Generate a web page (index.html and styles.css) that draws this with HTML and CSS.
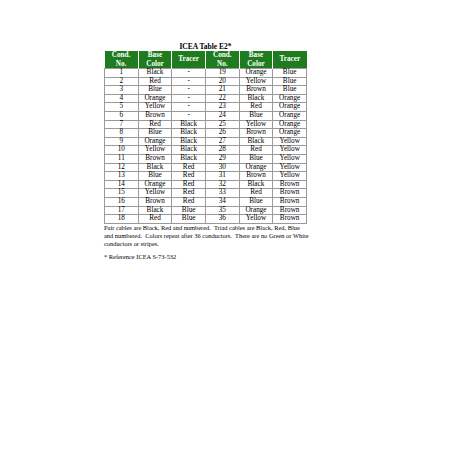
FILE: index.html
```html
<!DOCTYPE html>
<html>
<head>
<meta charset="utf-8">
<link rel="stylesheet" href="styles.css">
</head>
<body>
<div class="doc">
  <div class="title">ICEA Table E2*</div>
  <table class="tbl">
    <colgroup><col><col><col><col><col><col></colgroup>
    <thead>
      <tr><th>Cond.<br>No.</th><th>Base<br>Color</th><th>Tracer</th><th>Cond.<br>No.</th><th>Base<br>Color</th><th>Tracer</th></tr>
    </thead>
    <tbody>
      <tr><td>1</td><td>Black</td><td>-</td><td>19</td><td>Orange</td><td>Blue</td></tr>
      <tr><td>2</td><td>Red</td><td>-</td><td>20</td><td>Yellow</td><td>Blue</td></tr>
      <tr><td>3</td><td>Blue</td><td>-</td><td>21</td><td>Brown</td><td>Blue</td></tr>
      <tr><td>4</td><td>Orange</td><td>-</td><td>22</td><td>Black</td><td>Orange</td></tr>
      <tr><td>5</td><td>Yellow</td><td>-</td><td>23</td><td>Red</td><td>Orange</td></tr>
      <tr><td>6</td><td>Brown</td><td>-</td><td>24</td><td>Blue</td><td>Orange</td></tr>
      <tr><td>7</td><td>Red</td><td>Black</td><td>25</td><td>Yellow</td><td>Orange</td></tr>
      <tr><td>8</td><td>Blue</td><td>Black</td><td>26</td><td>Brown</td><td>Orange</td></tr>
      <tr><td>9</td><td>Orange</td><td>Black</td><td>27</td><td>Black</td><td>Yellow</td></tr>
      <tr><td>10</td><td>Yellow</td><td>Black</td><td>28</td><td>Red</td><td>Yellow</td></tr>
      <tr><td>11</td><td>Brown</td><td>Black</td><td>29</td><td>Blue</td><td>Yellow</td></tr>
      <tr><td>12</td><td>Black</td><td>Red</td><td>30</td><td>Orange</td><td>Yellow</td></tr>
      <tr><td>13</td><td>Blue</td><td>Red</td><td>31</td><td>Brown</td><td>Yellow</td></tr>
      <tr><td>14</td><td>Orange</td><td>Red</td><td>32</td><td>Black</td><td>Brown</td></tr>
      <tr><td>15</td><td>Yellow</td><td>Red</td><td>33</td><td>Red</td><td>Brown</td></tr>
      <tr><td>16</td><td>Brown</td><td>Red</td><td>34</td><td>Blue</td><td>Brown</td></tr>
      <tr><td>17</td><td>Black</td><td>Blue</td><td>35</td><td>Orange</td><td>Brown</td></tr>
      <tr><td>18</td><td>Red</td><td>Blue</td><td>36</td><td>Yellow</td><td>Brown</td></tr>
    </tbody>
  </table>
  <p class="note">Pair cables are Black, Red and numbered.&nbsp; Triad cables are Black, Red, Blue and numbered.&nbsp; Colors repeat after 36 conductors.&nbsp; There are no Green or White conductors or stripes.</p>
  <p class="ref">* Reference ICEA S-73-532</p>
</div>
</body>
</html>
```
FILE: styles.css
```css
html, body {
  margin: 0;
  padding: 0;
  background: #ffffff;
}
body {
  font-family: "Liberation Serif", "Times New Roman", serif;
  color: #000;
}
.doc {
  width: 203px;
  margin: 43px 0 0 104px;
}
.title {
  font-weight: bold;
  font-size: 7.5px;
  line-height: 8px;
  text-align: center;
}
.tbl {
  width: 203px;
  border-collapse: collapse;
  table-layout: fixed;
  font-size: 7.2px;
  line-height: 7.6px;
}
.tbl th {
  background: #1e7b1e;
  color: #ffffff;
  font-weight: bold;
  padding: 0;
  line-height: 8.5px;
  border-left: 1px solid #ffffff;
  border-right: 1px solid #ffffff;
  text-align: center;
}
.tbl th:first-child { border-left: 0; }
.tbl th:last-child { border-right: 0; }
.tbl td {
  border: 1px solid #9a9a9a;
  padding: 0;
  height: 7.6px;
  text-align: center;
}
.note {
  width: 205px;
  margin: 0;
  font-size: 6.4px;
  line-height: 8px;
}
.ref {
  margin: 5px 0 0 0;
  font-size: 6.4px;
  line-height: 8px;
}
```
